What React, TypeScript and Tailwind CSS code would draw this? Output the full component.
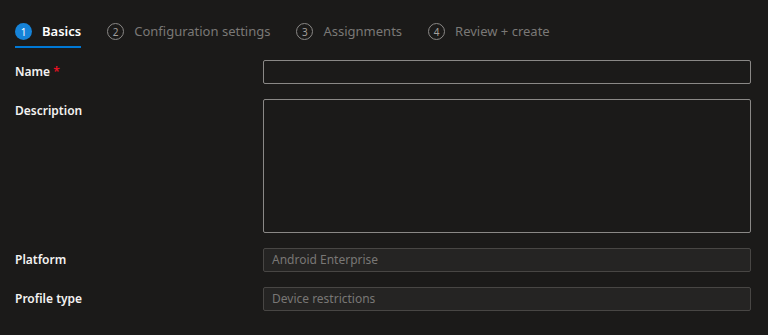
import React from 'react';

const steps = [
  { n: 1, label: 'Basics', active: true },
  { n: 2, label: 'Configuration settings' },
  { n: 3, label: 'Assignments' },
  { n: 4, label: 'Review + create' },
];

function Step({ n, label, active }: { n: number; label: string; active?: boolean }) {
  return (
    <div className={`flex items-center gap-[10px] h-[31px] ${active ? 'border-b-2 border-[#0078d4]' : 'border-b-2 border-transparent'}`}>
      {active ? (
        <span className="w-[17px] h-[17px] rounded-full bg-[#1683d8] text-white text-[10px] flex items-center justify-center leading-none">{n}</span>
      ) : (
        <span className="w-[17px] h-[17px] rounded-full border border-[#8a8886] text-[#a19f9d] text-[10px] flex items-center justify-center leading-none">{n}</span>
      )}
      <span className={`text-[13px] ${active ? 'font-semibold text-white' : 'text-[#7a7876]'}`}>{label}</span>
    </div>
  );
}

export default function App() {
  return (
    <div className="w-[768px] h-[335px] bg-[#1b1a19] text-[#f3f2f1] overflow-hidden" style={{ fontFamily: '"Noto Sans", "Open Sans", sans-serif' }}>
      <div className="flex items-end gap-[26px] pl-[15px] pt-[17px]">
        {steps.map((s) => (
          <Step key={s.n} {...s} />
        ))}
      </div>

      <div className="grid grid-cols-[248px_488px] gap-y-[15px] pl-[15px] pt-[12px]">
        <div className="text-[12px] font-semibold leading-[24px]">
          Name <span className="text-[#e81123]">*</span>
        </div>
        <div className="h-[24px] border border-[#8a8886] rounded-[2px]" />

        <div className="text-[12px] font-semibold leading-[24px]">Description</div>
        <div className="h-[134px] border border-[#8a8886] rounded-[2px]" />

        <div className="text-[12px] font-semibold leading-[24px]">Platform</div>
        <div className="h-[24px] border border-[#484644] bg-[#252423] rounded-[2px] px-[8px] text-[12px] leading-[22px] text-[#797775]">Android Enterprise</div>

        <div className="text-[12px] font-semibold leading-[24px]">Profile type</div>
        <div className="h-[24px] border border-[#484644] bg-[#252423] rounded-[2px] px-[8px] text-[12px] leading-[22px] text-[#797775]">Device restrictions</div>
      </div>
    </div>
  );
}
